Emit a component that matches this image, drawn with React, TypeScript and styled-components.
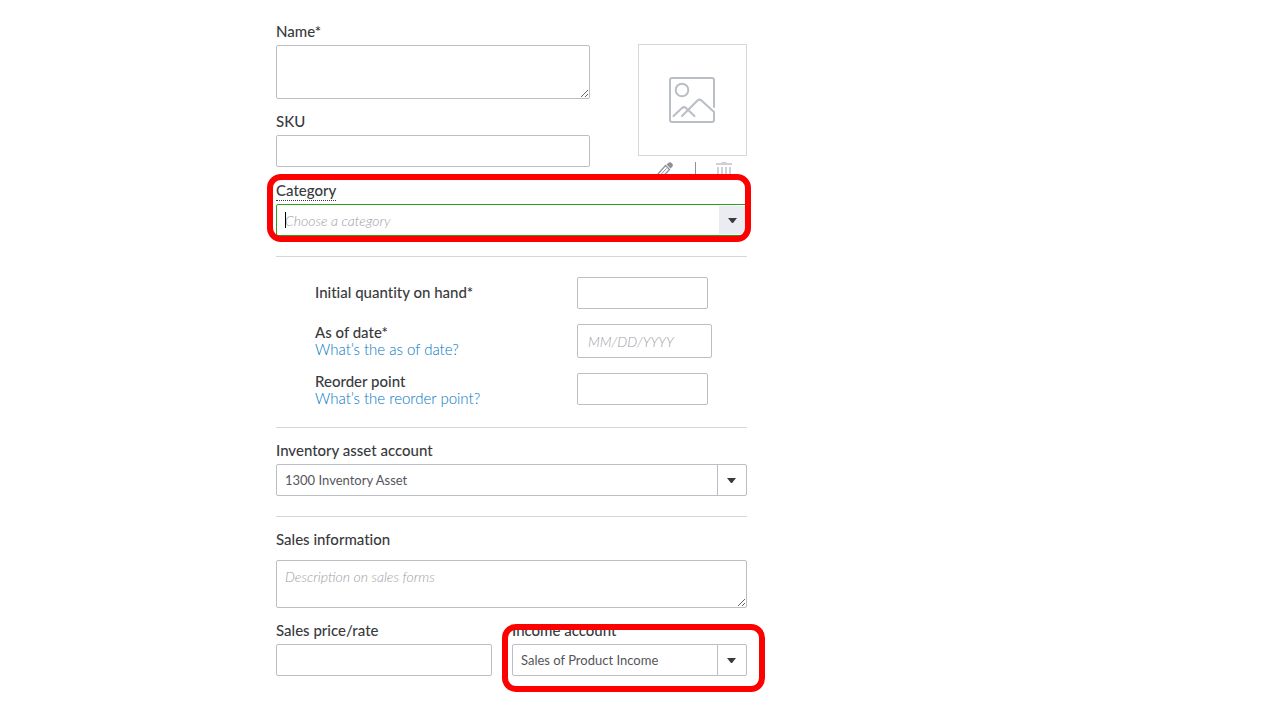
import React from 'react';
import styled, { createGlobalStyle, css } from 'styled-components';

const GlobalStyle = createGlobalStyle`
  *, *::before, *::after { box-sizing: border-box; }
  body {
    margin: 0;
    background: #fff;
    color: #393a3d;
    font-family: Lato, "Liberation Sans", sans-serif;
    font-size: 14px;
    font-variant-ligatures: none;
  }
`;

const Form = styled.form`
  display: flex;
  flex-direction: column;
  max-width: 471px;
  margin-left: 276px;
  padding: 23px 0 28px;
`;

const TopRow = styled.div`
  display: flex;
  gap: 48px;
  height: 159px;
`;

const MainColumn = styled.div`
  flex: 1;
  display: flex;
  flex-direction: column;
  gap: 14px;
  margin-bottom: 15px;
`;

const Field = styled.div`
  position: relative;
  display: flex;
  flex-direction: column;
  align-items: flex-start;
`;

const labelText = css`
  font-size: 15px;
  font-weight: 500;
  line-height: 17px;
`;

const Label = styled.label`
  ${labelText}
  margin-bottom: 5px;
`;

const DottedLabel = styled(Label)`
  height: 19px;
  margin-bottom: 3px;
  border-bottom: 1px dotted #393a3d;
`;

const SectionTitle = styled.h2`
  ${labelText}
  margin: 0 0 12px;
`;

const control = css`
  display: block;
  width: 100%;
  margin: 0;
  border: 1px solid #babec5;
  border-radius: 2px;
  background: #fff;
  color: #393a3d;
  font-family: inherit;
  font-size: 14px;
  font-weight: 300;
  outline: none;

  &::placeholder {
    color: #9a9ea6;
    font-style: italic;
    opacity: 1;
  }
`;

const TextInput = styled.input`
  ${control}
  height: 32px;
  padding: 0 8px;
`;

const DateInput = styled(TextInput)`
  width: 135px;
  height: 34px;
  padding: 0 10px;
`;

const TextArea = styled.textarea<{ $height: number }>`
  ${control}
  height: ${({ $height }) => $height}px;
  padding: 8px;
  line-height: 16px;
  resize: both;
`;

const Combo = styled.div`
  position: relative;
  width: 100%;
`;

const SelectBox = styled.select`
  ${control}
  appearance: none;
  height: 32px;
  padding: 0 38px 0 8px;
  color: #55565b;
  font-size: 13px;
  font-weight: 400;
`;

const ComboInput = styled(TextInput)`
  border-color: #2ca01c;
  padding-right: 36px;
`;

const Caret = styled.span`
  position: absolute;
  left: 9px;
  top: 8px;
  width: 1px;
  height: 16px;
  background: #000;
`;

const ArrowCell = styled.span`
  position: absolute;
  top: 1px;
  right: 1px;
  bottom: 1px;
  width: 29px;
  display: flex;
  align-items: center;
  justify-content: center;
  border-left: 1px solid #babec5;
  pointer-events: none;
`;

const ArrowButton = styled.button`
  position: absolute;
  top: 2px;
  right: 1px;
  bottom: 2px;
  width: 27px;
  display: flex;
  align-items: center;
  justify-content: center;
  padding: 0;
  border: 0;
  background: #ebecf1;
`;

const Highlight = styled.div<{ $inset: string }>`
  position: absolute;
  inset: ${({ $inset }) => $inset};
  border: 6px solid #ff0000;
  border-radius: 14px;
  pointer-events: none;
`;

const ImageColumn = styled.div`
  width: 109px;
  padding-top: 21px;
`;

const ImageBox = styled.div`
  display: flex;
  align-items: center;
  justify-content: center;
  height: 112px;
  border: 1px solid #d4d7dc;
`;

const ImageTools = styled.div`
  display: flex;
  align-items: flex-start;
  justify-content: space-between;
  height: 24px;
  padding: 6px 15px 0 18px;
`;

const ToolButton = styled.button`
  display: flex;
  padding: 0;
  border: 0;
  background: none;
`;

const ToolDivider = styled.span`
  width: 1px;
  height: 17px;
  background: #8d9096;
`;

const Divider = styled.hr`
  width: 100%;
  height: 1px;
  margin: 20px 0 0;
  border: 0;
  background: #d4d7dc;
`;

const StockGrid = styled.div`
  display: flex;
  flex-direction: column;
  gap: 15px;
  padding: 20px 0 0 39px;
`;

const StockRow = styled.div`
  display: grid;
  grid-template-columns: 262px 1fr;
  min-height: 32px;
`;

const StockText = styled.div`
  display: flex;
  flex-direction: column;
  align-items: flex-start;
`;

const StockLabel = styled.label<{ $single?: boolean }>`
  ${labelText}
  line-height: ${({ $single }) => ($single ? 30 : 16)}px;
`;

const HelpLink = styled.a`
  color: #0077c5;
  font-size: 15px;
  font-weight: 300;
  line-height: 18px;
  text-decoration: none;
`;

const StockInput = styled(TextInput)`
  width: 131px;
`;

const Section = styled.section`
  padding-top: 14px;
`;

const PriceRow = styled.div`
  display: grid;
  grid-template-columns: 216fr 235fr;
  gap: 20px;
  margin-top: 14px;
`;

const DownArrow = () => (
  <svg width="10" height="5" viewBox="0 0 10 5" aria-hidden="true">
    <path d="M0 0h9L5 5H4z" fill="#393a3d" />
  </svg>
);

const Picture = () => (
  <svg width="47" height="46" viewBox="0 0 47 46" fill="none" stroke="#babec5" strokeWidth="2" strokeLinecap="round" strokeLinejoin="round" aria-hidden="true">
    <path d="M45 30V3a2 2 0 0 0-2-2H3a2 2 0 0 0-2 2v40a2 2 0 0 0 2 2h40a2 2 0 0 0 2-2v-8L32.500 23.500q-2-1.700-4 0L13 39" />
    <path d="M4.500 39l8.500-8q2-1.800 4 0l8.500 8" />
    <circle cx="13" cy="13" r="6.300" />
  </svg>
);

const Pencil = () => (
  <svg width="18" height="18" viewBox="0 0 18 18" fill="none" stroke="#8d9096" strokeWidth="1.300" aria-hidden="true">
    <path d="M9.500 3.500l4 4L5 16.500l-4 .5 .5-4.500z" />
    <path d="M10.500 6.500L4 13.500" strokeWidth="1" />
    <path d="M11.500 2.500l1.500-1.300q1.300-.6 2.500.5t.5 2.300L14.500 5.500z" fill="#8d9096" />
  </svg>
);

const Trash = () => (
  <svg width="16" height="18" viewBox="0 0 16 18" fill="#cfd1d6" aria-hidden="true">
    <path d="M0 1h5l1-1h4l1 1h5v2H0zM1 5h2v11H1zM5 5h2v11H5zM9 5h2v11H9zM13 5h2v11h-2zM1 15h14v2H1z" />
  </svg>
);

type SelectFieldProps = { id: string; label: string; value: string; children?: React.ReactNode };

const SelectField = ({ id, label, value, children }: SelectFieldProps) => (
  <Field>
    <Label htmlFor={id}>{label}</Label>
    <Combo>
      <SelectBox id={id} defaultValue={value}>
        <option>{value}</option>
      </SelectBox>
      <ArrowCell><DownArrow /></ArrowCell>
    </Combo>
    {children}
  </Field>
);

export default function App() {
  return (
    <>
      <GlobalStyle />
      <Form onSubmit={(e) => e.preventDefault()}>
        <TopRow>
          <MainColumn>
            <Field>
              <Label htmlFor="name">Name*</Label>
              <TextArea id="name" $height={54} />
            </Field>
            <Field>
              <Label htmlFor="sku">SKU</Label>
              <TextInput id="sku" />
            </Field>
          </MainColumn>
          <ImageColumn>
            <ImageBox><Picture /></ImageBox>
            <ImageTools>
              <ToolButton type="button" aria-label="Edit image"><Pencil /></ToolButton>
              <ToolDivider />
              <ToolButton type="button" aria-label="Delete image"><Trash /></ToolButton>
            </ImageTools>
          </ImageColumn>
        </TopRow>

        <Field>
          <DottedLabel htmlFor="category">Category</DottedLabel>
          <Combo>
            <ComboInput id="category" role="combobox" aria-expanded={false} placeholder="Choose a category" />
            <Caret />
            <ArrowButton type="button" aria-label="Show categories"><DownArrow /></ArrowButton>
          </Combo>
          <Highlight $inset="-8px -4px -6px -9px" />
        </Field>

        <Divider />
        <StockGrid>
          <StockRow>
            <StockText>
              <StockLabel htmlFor="quantity" $single>Initial quantity on hand*</StockLabel>
            </StockText>
            <StockInput id="quantity" />
          </StockRow>
          <StockRow>
            <StockText>
              <StockLabel htmlFor="date">As of date*</StockLabel>
              <HelpLink href="#date">What’s the as of date?</HelpLink>
            </StockText>
            <DateInput id="date" placeholder="MM/DD/YYYY" />
          </StockRow>
          <StockRow>
            <StockText>
              <StockLabel htmlFor="reorder">Reorder point</StockLabel>
              <HelpLink href="#reorder">What’s the reorder point?</HelpLink>
            </StockText>
            <StockInput id="reorder" />
          </StockRow>
        </StockGrid>

        <Divider />
        <Section>
          <SelectField id="asset" label="Inventory asset account" value="1300 Inventory Asset" />
        </Section>

        <Divider />
        <Section>
          <SectionTitle id="sales">Sales information</SectionTitle>
          <TextArea aria-labelledby="sales" placeholder="Description on sales forms" $height={48} />
          <PriceRow>
            <Field>
              <Label htmlFor="price">Sales price/rate</Label>
              <TextInput id="price" />
            </Field>
            <SelectField id="income" label="Income account" value="Sales of Product Income">
              <Highlight $inset="2px -18px -16px -10px" />
            </SelectField>
          </PriceRow>
        </Section>
      </Form>
    </>
  );
}
